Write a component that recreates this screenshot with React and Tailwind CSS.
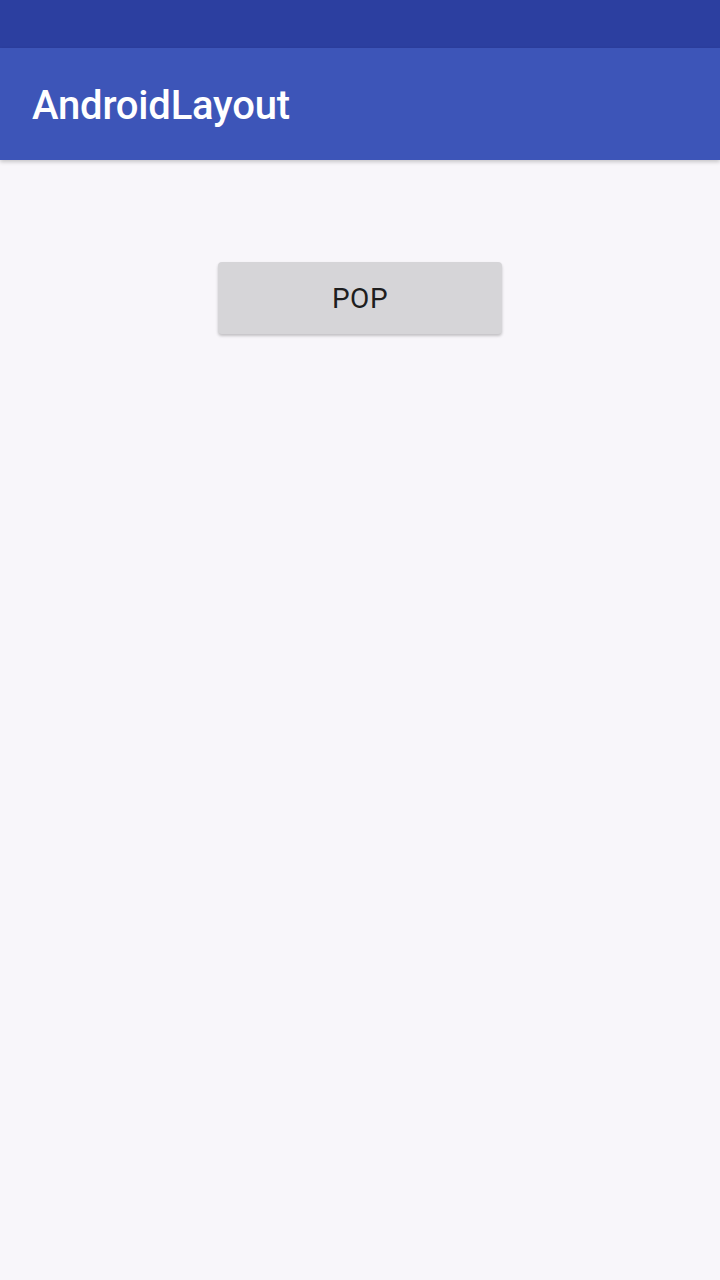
export default function App() {
  return (
    <div className="w-[720px] h-[1280px] flex flex-col bg-[#f8f6fa]" style={{ fontFamily: "Roboto, 'Liberation Sans', sans-serif" }}>
      <div className="h-[48px] bg-[#2c3fa0] shrink-0" />
      <div className="h-[112px] bg-[#3d55b8] shrink-0 flex items-center px-[32px] pt-[4px] shadow-[0_2px_4px_rgba(0,0,0,0.2)] relative z-10">
        <span className="text-white text-[40px] font-medium leading-none tracking-[-0.2px]">AndroidLayout</span>
      </div>
      <div className="flex justify-center pt-[102px]">
        <button className="w-[284px] h-[72px] pt-[2px] bg-[#d6d5d8] rounded-[4px] shadow-[0_2px_3px_rgba(0,0,0,0.22)] text-[#1e1e1e] text-[28px] font-normal leading-none tracking-[0.5px]">
          POP
        </button>
      </div>
    </div>
  );
}
